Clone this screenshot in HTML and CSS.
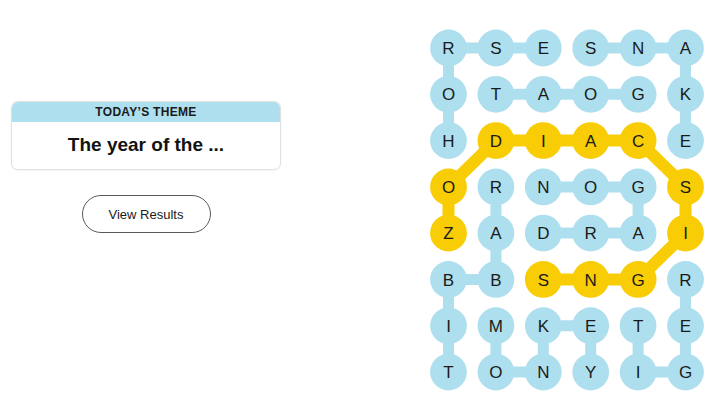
FILE: index.html
```html
<!DOCTYPE html>
<html lang="en">
<head>
<meta charset="utf-8">
<title>Strands</title>
<link rel="stylesheet" href="styles.css">
</head>
<body>
<div class="page">
  <section class="side">
    <div class="theme-card">
      <div class="theme-label">TODAY’S THEME</div>
      <div class="theme-text">The year of the ...</div>
    </div>
    <button class="results-btn" type="button">View Results</button>
  </section>
  <svg class="board" width="280" height="364" viewBox="0 0 280 364" xmlns="http://www.w3.org/2000/svg">
    <g class="links-blue" stroke="#aedfee" stroke-width="11" stroke-linecap="round">
      <line x1="20.5" y1="20" x2="67.9" y2="20"/>
      <line x1="67.9" y1="20" x2="115.3" y2="20"/>
      <line x1="162.7" y1="20" x2="210.1" y2="20"/>
      <line x1="210.1" y1="20" x2="257.5" y2="20"/>
      <line x1="20.5" y1="20" x2="20.5" y2="66.3"/>
      <line x1="20.5" y1="66.3" x2="20.5" y2="112.6"/>
      <line x1="257.5" y1="20" x2="257.5" y2="66.3"/>
      <line x1="257.5" y1="66.3" x2="257.5" y2="112.6"/>
      <line x1="67.9" y1="66.3" x2="115.3" y2="66.3"/>
      <line x1="115.3" y1="66.3" x2="162.7" y2="66.3"/>
      <line x1="162.7" y1="66.3" x2="210.1" y2="66.3"/>
      <line x1="67.9" y1="158.9" x2="67.9" y2="205.1"/>
      <line x1="67.9" y1="205.1" x2="67.9" y2="251.4"/>
      <line x1="115.3" y1="158.9" x2="162.7" y2="158.9"/>
      <line x1="162.7" y1="158.9" x2="210.1" y2="158.9"/>
      <line x1="210.1" y1="158.9" x2="210.1" y2="205.1"/>
      <line x1="115.3" y1="205.1" x2="162.7" y2="205.1"/>
      <line x1="162.7" y1="205.1" x2="210.1" y2="205.1"/>
      <line x1="20.5" y1="251.4" x2="67.9" y2="251.4"/>
      <line x1="20.5" y1="251.4" x2="20.5" y2="297.7"/>
      <line x1="20.5" y1="297.7" x2="20.5" y2="344"/>
      <line x1="257.5" y1="251.4" x2="257.5" y2="297.7"/>
      <line x1="257.5" y1="297.7" x2="257.5" y2="344"/>
      <line x1="67.9" y1="297.7" x2="67.9" y2="344"/>
      <line x1="67.9" y1="344" x2="115.3" y2="344"/>
      <line x1="115.3" y1="344" x2="115.3" y2="297.7"/>
      <line x1="115.3" y1="297.7" x2="162.7" y2="297.7"/>
      <line x1="162.7" y1="297.7" x2="162.7" y2="344"/>
      <line x1="210.1" y1="297.7" x2="210.1" y2="344"/>
      <line x1="210.1" y1="344" x2="257.5" y2="344"/>
    </g>
    <g class="links-gold" stroke="#f8cd05" stroke-width="12" stroke-linecap="round" stroke-linejoin="round" fill="none">
      <polyline points="20.5,205.1 20.5,158.9 67.9,112.6 115.3,112.6 162.7,112.6 210.1,112.6 257.5,158.9 257.5,205.1 210.1,251.4 162.7,251.4 115.3,251.4"/>
    </g>
    <g class="dots" font-family="'Liberation Sans', Arial, sans-serif" font-size="17" text-anchor="middle" fill="#1a1a1a">
      <g fill="#aedfee">
        <circle cx="20.5" cy="20" r="18.4"/><circle cx="67.9" cy="20" r="18.4"/><circle cx="115.3" cy="20" r="18.4"/><circle cx="162.7" cy="20" r="18.4"/><circle cx="210.1" cy="20" r="18.4"/><circle cx="257.5" cy="20" r="18.4"/>
        <circle cx="20.5" cy="66.3" r="18.4"/><circle cx="67.9" cy="66.3" r="18.4"/><circle cx="115.3" cy="66.3" r="18.4"/><circle cx="162.7" cy="66.3" r="18.4"/><circle cx="210.1" cy="66.3" r="18.4"/><circle cx="257.5" cy="66.3" r="18.4"/>
        <circle cx="20.5" cy="112.6" r="18.4"/><circle cx="257.5" cy="112.6" r="18.4"/>
        <circle cx="67.9" cy="158.9" r="18.4"/><circle cx="115.3" cy="158.9" r="18.4"/><circle cx="162.7" cy="158.9" r="18.4"/><circle cx="210.1" cy="158.9" r="18.4"/>
        <circle cx="67.9" cy="205.1" r="18.4"/><circle cx="115.3" cy="205.1" r="18.4"/><circle cx="162.7" cy="205.1" r="18.4"/><circle cx="210.1" cy="205.1" r="18.4"/>
        <circle cx="20.5" cy="251.4" r="18.4"/><circle cx="67.9" cy="251.4" r="18.4"/><circle cx="257.5" cy="251.4" r="18.4"/>
        <circle cx="20.5" cy="297.7" r="18.4"/><circle cx="67.9" cy="297.7" r="18.4"/><circle cx="115.3" cy="297.7" r="18.4"/><circle cx="162.7" cy="297.7" r="18.4"/><circle cx="210.1" cy="297.7" r="18.4"/><circle cx="257.5" cy="297.7" r="18.4"/>
        <circle cx="20.5" cy="344" r="18.4"/><circle cx="67.9" cy="344" r="18.4"/><circle cx="115.3" cy="344" r="18.4"/><circle cx="162.7" cy="344" r="18.4"/><circle cx="210.1" cy="344" r="18.4"/><circle cx="257.5" cy="344" r="18.4"/>
      </g>
      <g fill="#f8cd05">
        <circle cx="67.9" cy="112.6" r="18.4"/><circle cx="115.3" cy="112.6" r="18.4"/><circle cx="162.7" cy="112.6" r="18.4"/><circle cx="210.1" cy="112.6" r="18.4"/>
        <circle cx="20.5" cy="158.9" r="18.4"/><circle cx="257.5" cy="158.9" r="18.4"/>
        <circle cx="20.5" cy="205.1" r="18.4"/><circle cx="257.5" cy="205.1" r="18.4"/>
        <circle cx="115.3" cy="251.4" r="18.4"/><circle cx="162.7" cy="251.4" r="18.4"/><circle cx="210.1" cy="251.4" r="18.4"/>
      </g>
      <g>
        <text x="20.5" y="26.1">R</text><text x="67.9" y="26.1">S</text><text x="115.3" y="26.1">E</text><text x="162.7" y="26.1">S</text><text x="210.1" y="26.1">N</text><text x="257.5" y="26.1">A</text>
        <text x="20.5" y="72.4">O</text><text x="67.9" y="72.4">T</text><text x="115.3" y="72.4">A</text><text x="162.7" y="72.4">O</text><text x="210.1" y="72.4">G</text><text x="257.5" y="72.4">K</text>
        <text x="20.5" y="118.7">H</text><text x="67.9" y="118.7">D</text><text x="115.3" y="118.7">I</text><text x="162.7" y="118.7">A</text><text x="210.1" y="118.7">C</text><text x="257.5" y="118.7">E</text>
        <text x="20.5" y="165">O</text><text x="67.9" y="165">R</text><text x="115.3" y="165">N</text><text x="162.7" y="165">O</text><text x="210.1" y="165">G</text><text x="257.5" y="165">S</text>
        <text x="20.5" y="211.2">Z</text><text x="67.9" y="211.2">A</text><text x="115.3" y="211.2">D</text><text x="162.7" y="211.2">R</text><text x="210.1" y="211.2">A</text><text x="257.5" y="211.2">I</text>
        <text x="20.5" y="257.5">B</text><text x="67.9" y="257.5">B</text><text x="115.3" y="257.5">S</text><text x="162.7" y="257.5">N</text><text x="210.1" y="257.5">G</text><text x="257.5" y="257.5">R</text>
        <text x="20.5" y="303.8">I</text><text x="67.9" y="303.8">M</text><text x="115.3" y="303.8">K</text><text x="162.7" y="303.8">E</text><text x="210.1" y="303.8">T</text><text x="257.5" y="303.8">E</text>
        <text x="20.5" y="350.1">T</text><text x="67.9" y="350.1">O</text><text x="115.3" y="350.1">N</text><text x="162.7" y="350.1">Y</text><text x="210.1" y="350.1">I</text><text x="257.5" y="350.1">G</text>
      </g>
    </g>
  </svg>
</div>
</body>
</html>
```

FILE: styles.css
```css
html, body {
  margin: 0;
  padding: 0;
  background: #ffffff;
}

body {
  font-family: "Liberation Sans", Arial, sans-serif;
  color: #121212;
}

.page {
  display: flex;
  align-items: flex-start;
  width: 728px;
  height: 409px;
  overflow: hidden;
}

.side {
  width: 292px;
  padding-top: 101px;
  display: flex;
  flex-direction: column;
  align-items: center;
}

.theme-card {
  width: 270px;
  box-sizing: border-box;
  border: 1px solid #e1e1e1;
  border-radius: 7px;
  overflow: hidden;
  background: #ffffff;
  box-shadow: 0 1px 2px rgba(0, 0, 0, 0.05);
}

.theme-label {
  height: 20px;
  line-height: 21px;
  background: #aedfee;
  text-align: center;
  font-size: 12px;
  font-weight: 700;
  letter-spacing: 0.3px;
  color: #1a1a1a;
}

.theme-text {
  height: 47px;
  line-height: 46px;
  text-align: center;
  font-size: 19px;
  font-weight: 700;
  color: #121212;
}

.results-btn {
  margin-top: 25px;
  width: 129px;
  height: 38px;
  border: 1px solid #5a5a5a;
  border-radius: 19px;
  background: #ffffff;
  font-family: "Liberation Sans", Arial, sans-serif;
  font-size: 13px;
  color: #1a1a1a;
  padding: 0;
}

.board {
  display: block;
  margin-top: 28px;
  margin-left: 136px;
}
```
